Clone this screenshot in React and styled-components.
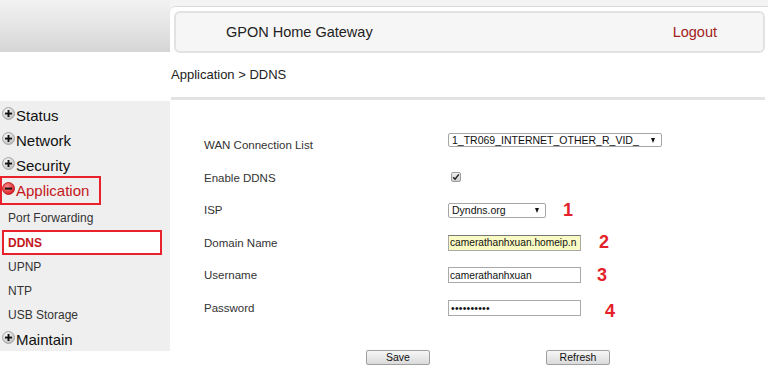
// Library& Package -----------------------------------------
import styled, { createGlobalStyle } from 'styled-components';

// Data -----------------------------------------------------
const menu = [
  { name: 'Status' },
  { name: 'Network' },
  { name: 'Security' },
  {
    name: 'Application',
    open: true,
    items: ['Port Forwarding', 'DDNS', 'UPNP', 'NTP', 'USB Storage'],
    current: 'DDNS',
  },
  { name: 'Maintain' },
];

function ToggleIcon({ open }) {
  return (
    <svg width="13" height="13" viewBox="0 0 13 13">
      <defs>
        <radialGradient id={open ? 'gOpen' : 'gClosed'} cx="40%" cy="35%" r="70%">
          <stop offset="0%" stopColor={open ? '#ff8a8a' : '#ffffff'} />
          <stop offset="100%" stopColor={open ? '#d8161c' : '#b8b8b8'} />
        </radialGradient>
      </defs>
      <circle cx="6.5" cy="6.5" r="6" fill={`url(#${open ? 'gOpen' : 'gClosed'})`} stroke={open ? '#b01015' : '#9a9a9a'} strokeWidth="0.8" />
      <rect x="3" y="5.6" width="7" height="1.9" fill="#111" />
      {!open && <rect x="5.55" y="3" width="1.9" height="7" fill="#111" />}
    </svg>
  );
}

function Select({ value, width, raise }) {
  return (
    <SelectBox $width={width} $raise={raise}>
      <span>{value}</span>
      <Arrow />
    </SelectBox>
  );
}

export default function App() {
  return <>
    <GlobalStyle />
    <Page>
      <Sidebar>
        <SideTop />
        <Menu>
          {menu.map((m) => (
            <div key={m.name}>
              <MenuHead $open={m.open}>
                <ToggleIcon open={m.open} />
                <span>{m.name}</span>
              </MenuHead>
              {m.items && (
                <SubList>
                  {m.items.map((it) => (
                    <SubItem key={it} $current={it === m.current}>{it}</SubItem>
                  ))}
                </SubList>
              )}
            </div>
          ))}
        </Menu>
      </Sidebar>

      <Main>
        <Panel>
          <HeaderBar>
            <Title>GPON Home Gateway</Title>
            <Logout>Logout</Logout>
          </HeaderBar>
          <Breadcrumb>Application &gt; DDNS</Breadcrumb>
          <Rule />

          <Form>
            <Label>WAN Connection List</Label>
            <Cell>
              <Select value="1_TR069_INTERNET_OTHER_R_VID_" width={214} raise />
            </Cell>

            <Label>Enable DDNS</Label>
            <Cell>
              <CheckBox>
                <svg width="8" height="8" viewBox="0 0 8 8">
                  <path d="M1.2 4.2 L3.1 6.2 L6.8 1.4" fill="none" stroke="#222" strokeWidth="1.5" />
                </svg>
              </CheckBox>
            </Cell>

            <Label>ISP</Label>
            <Cell>
              <Select value="Dyndns.org" width={98} />
              <Mark $dx={17}>1</Mark>
            </Cell>

            <Label>Domain Name</Label>
            <Cell>
              <TextInput $filled readOnly value="camerathanhxuan.homeip.n" />
              <Mark $dx={18}>2</Mark>
            </Cell>

            <Label>Username</Label>
            <Cell>
              <TextInput readOnly value="camerathanhxuan" />
              <Mark $dx={16}>3</Mark>
            </Cell>

            <Label>Password</Label>
            <Cell>
              <TextInput type="password" readOnly value="1234567890" />
              <Mark $dx={24} $dy={4}>4</Mark>
            </Cell>
          </Form>

          <ButtonRow>
            <Button>Save</Button>
            <Button>Refresh</Button>
          </ButtonRow>
        </Panel>
      </Main>
    </Page>
  </>
}

// Styled Components -----------------------------------------
const GlobalStyle = createGlobalStyle`
  html, body {
    margin: 0;
    padding: 0;
    background: #ffffff;
  }
  body {
    font-family: "Liberation Sans", Arial, sans-serif;
    color: #222;
  }
`

const Page = styled.div`
  display: grid;
  grid-template-columns: 170px 1fr;
  width: 768px;
  height: 371px;
  overflow: hidden;
`

const Sidebar = styled.div`
  display: flex;
  flex-direction: column;
`

const SideTop = styled.div`
  height: 52px;
  background: linear-gradient(#f2f2f2 0%, #e6e6e6 45%, #d6d6d6 100%);
`

const Menu = styled.div`
  height: 250px;
  box-sizing: border-box;
  margin-top: 49px;
  padding-top: 2px;
  background: #efefef;
`

const MenuHead = styled.div`
  display: flex;
  align-items: center;
  gap: 1px;
  box-sizing: border-box;
  height: ${p => p.$open ? '29px' : '25px'};
  margin: ${p => p.$open ? '-2px 0' : '0'};
  width: ${p => p.$open ? '101px' : 'auto'};
  padding-left: ${p => p.$open ? '0' : '2px'};
  border: ${p => p.$open ? '2px solid #e8212b' : 'none'};
  font-size: 15px;
  color: ${p => p.$open ? '#c4161c' : '#111'};
  svg{
    flex: none;
    margin-top: -4px;
  }
`

const SubList = styled.div`
  padding-top: 3px;
`

const SubItem = styled.div`
  display: flex;
  align-items: center;
  box-sizing: border-box;
  height: ${p => p.$current ? '25px' : '24px'};
  margin-left: ${p => p.$current ? '2px' : '0'};
  width: ${p => p.$current ? '160px' : 'auto'};
  padding-left: ${p => p.$current ? '4px' : '8px'};
  border: ${p => p.$current ? '2px solid #e8212b' : 'none'};
  background: ${p => p.$current ? '#ffffff' : 'transparent'};
  font-size: 12px;
  font-weight: ${p => p.$current ? 700 : 400};
  color: ${p => p.$current ? '#c4161c' : '#333'};
`

const Main = styled.div`
  background: linear-gradient(#f3f3f3, #e9e9e9);
  padding-top: 6px;
  display: flex;
`

const Panel = styled.div`
  flex: 1;
  background: #ffffff;
  border-top: 1px solid #dadada;
  border-top-left-radius: 6px;
  display: flex;
  flex-direction: column;
`

const HeaderBar = styled.div`
  margin: 4px 3px 0 4px;
  height: 42px;
  box-sizing: border-box;
  border: 2px solid #e2e2e2;
  border-radius: 6px;
  background: #f6f6f6;
  display: flex;
  align-items: center;
  justify-content: space-between;
  padding: 0 46px 0 50px;
  font-size: 14.5px;
`

const Title = styled.span`
  color: #222;
`

const Logout = styled.span`
  color: #a3211b;
`

const Breadcrumb = styled.div`
  margin: 14px 0 0 1px;
  font-size: 13px;
  line-height: 16px;
  color: #222;
`

const Rule = styled.hr`
  margin: 14px 3px 0 1px;
  border: none;
  border-top: 3px solid #e3e3e3;
  height: 0;
`

const Form = styled.div`
  display: grid;
  grid-template-columns: 244px auto;
  grid-auto-rows: 32.5px;
  padding: 29px 0 0 34px;
`

const Label = styled.div`
  display: flex;
  align-items: center;
  font-size: 11.5px;
  color: #333;
`

const Cell = styled.div`
  display: flex;
  align-items: center;
`

const SelectBox = styled.div`
  display: flex;
  align-items: center;
  justify-content: space-between;
  box-sizing: border-box;
  width: ${p => p.$width}px;
  height: ${p => p.$raise ? '14px' : '15px'};
  margin-top: ${p => p.$raise ? '-10px' : '0'};
  padding: 0 6px 0 3px;
  border: 1px solid #a6a6a6;
  border-radius: 2px;
  background: #ffffff;
  font-size: 10.5px;
  color: #111;
  white-space: nowrap;
`

const Arrow = styled.i`
  width: 0;
  height: 0;
  border-left: 2.5px solid transparent;
  border-right: 2.5px solid transparent;
  border-top: 5px solid #111;
`

const CheckBox = styled.span`
  display: inline-flex;
  align-items: center;
  justify-content: center;
  width: 10px;
  height: 10px;
  margin: -2px 0 0 3px;
  box-sizing: border-box;
  border: 1px solid #9c9c9c;
  border-radius: 2px;
  background: linear-gradient(#f0f0f0, #cfcfcf);
`

const TextInput = styled.input`
  width: 133px;
  height: 16px;
  box-sizing: border-box;
  padding: 0 1px;
  margin: 0;
  border: 1px solid #a9a9a9;
  border-top-color: ${p => p.$filled ? '#777' : '#a9a9a9'};
  background: ${p => p.$filled ? '#fafac4' : '#ffffff'};
  font-family: "Liberation Sans", Arial, sans-serif;
  font-size: 10.2px;
  color: #111;
  outline: none;
  &[type='password']{
    padding-left: 2px;
    font-size: 10.5px;
    letter-spacing: 0.2px;
  }
`

const Mark = styled.span`
  margin-left: ${p => p.$dx}px;
  transform: translateY(${p => p.$dy || 0}px);
  font-size: 18px;
  font-weight: 700;
  color: #e4202a;
`

const ButtonRow = styled.div`
  display: flex;
  gap: 116px;
  margin: 26px 0 0 196px;
`

const Button = styled.button`
  width: 64px;
  height: 15px;
  padding: 0;
  box-sizing: border-box;
  border: 1px solid #9f9f9f;
  border-radius: 2px;
  background: linear-gradient(#f7f7f7, #dadada);
  font-family: "Liberation Sans", Arial, sans-serif;
  font-size: 10.5px;
  line-height: 13px;
  color: #111;
`
